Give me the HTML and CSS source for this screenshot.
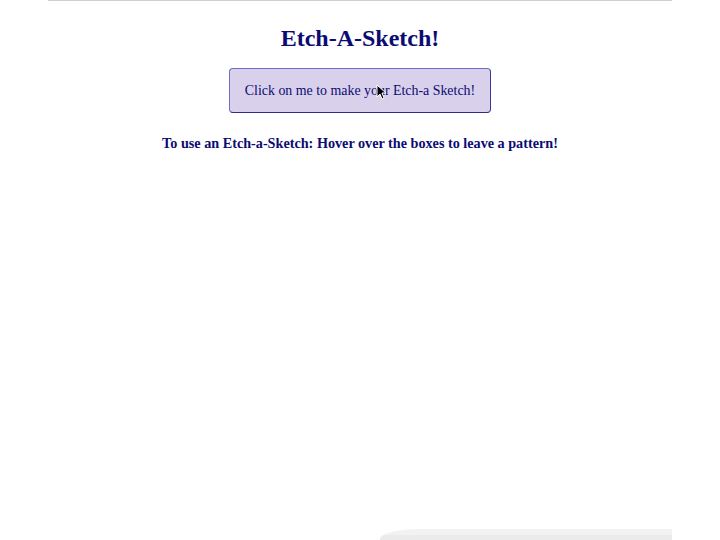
FILE: index.html
```html
<!DOCTYPE html>
<html lang="en">
<head>
<meta charset="utf-8">
<title>Etch-A-Sketch!</title>
<link rel="stylesheet" href="styles.css">
</head>
<body>
  <main class="page">
    <h1 class="title">Etch-A-Sketch!</h1>
    <div class="actions">
      <button class="make-btn" type="button">Click on me to make your Etch-a Sketch!
        <svg class="pointer" width="10" height="16" viewBox="0 0 10 16" aria-hidden="true">
          <path d="M1 1 L1 13 L4 10 L6 15 L8 14 L6 9 L10 9 Z" fill="#000" stroke="#fff" stroke-width="1"/>
        </svg>
      </button>
    </div>
    <p class="hint">To use an Etch-a-Sketch: Hover over the boxes to leave a pattern!</p>
    <div class="board"></div>
  </main>
</body>
</html>
```
FILE: styles.css
```css
html, body {
  margin: 0;
  background: #ffffff;
}

body {
  font-family: "Liberation Serif", "DejaVu Serif", serif;
  color: #0b0b72;
}

.page {
  width: 624px;
  margin: 0 auto;
  border-top: 1px solid #cfcfcf;
  display: flex;
  flex-direction: column;
  align-items: center;
  text-align: center;
  height: 539px;
  overflow: hidden;
}

.title {
  margin: 24px 0 0;
  font-size: 24px;
  line-height: 26px;
  font-weight: bold;
}

.actions {
  margin-top: 17px;
}

.make-btn {
  position: relative;
  width: 262px;
  height: 45px;
  background: #d9d1ec;
  border: 1px solid #6f6cc4;
  border-bottom-color: #2e2b8e;
  border-right-color: #3a37a0;
  border-radius: 4px;
  font-family: inherit;
  font-size: 13.9px;
  color: #0b0b72;
  padding: 0;
}

.pointer {
  position: absolute;
  left: 146px;
  top: 15px;
}

.hint {
  margin: 22px 0 0;
  font-size: 14.2px;
  line-height: 16px;
  font-weight: bold;
}

.board {
  align-self: flex-end;
  margin-top: 378px;
  width: 292px;
  height: 11px;
  flex-shrink: 0;
  background: linear-gradient(#f2f2f2 0 6px, #ebebeb 6px);
  border-top-left-radius: 40px 10px;
}
```
